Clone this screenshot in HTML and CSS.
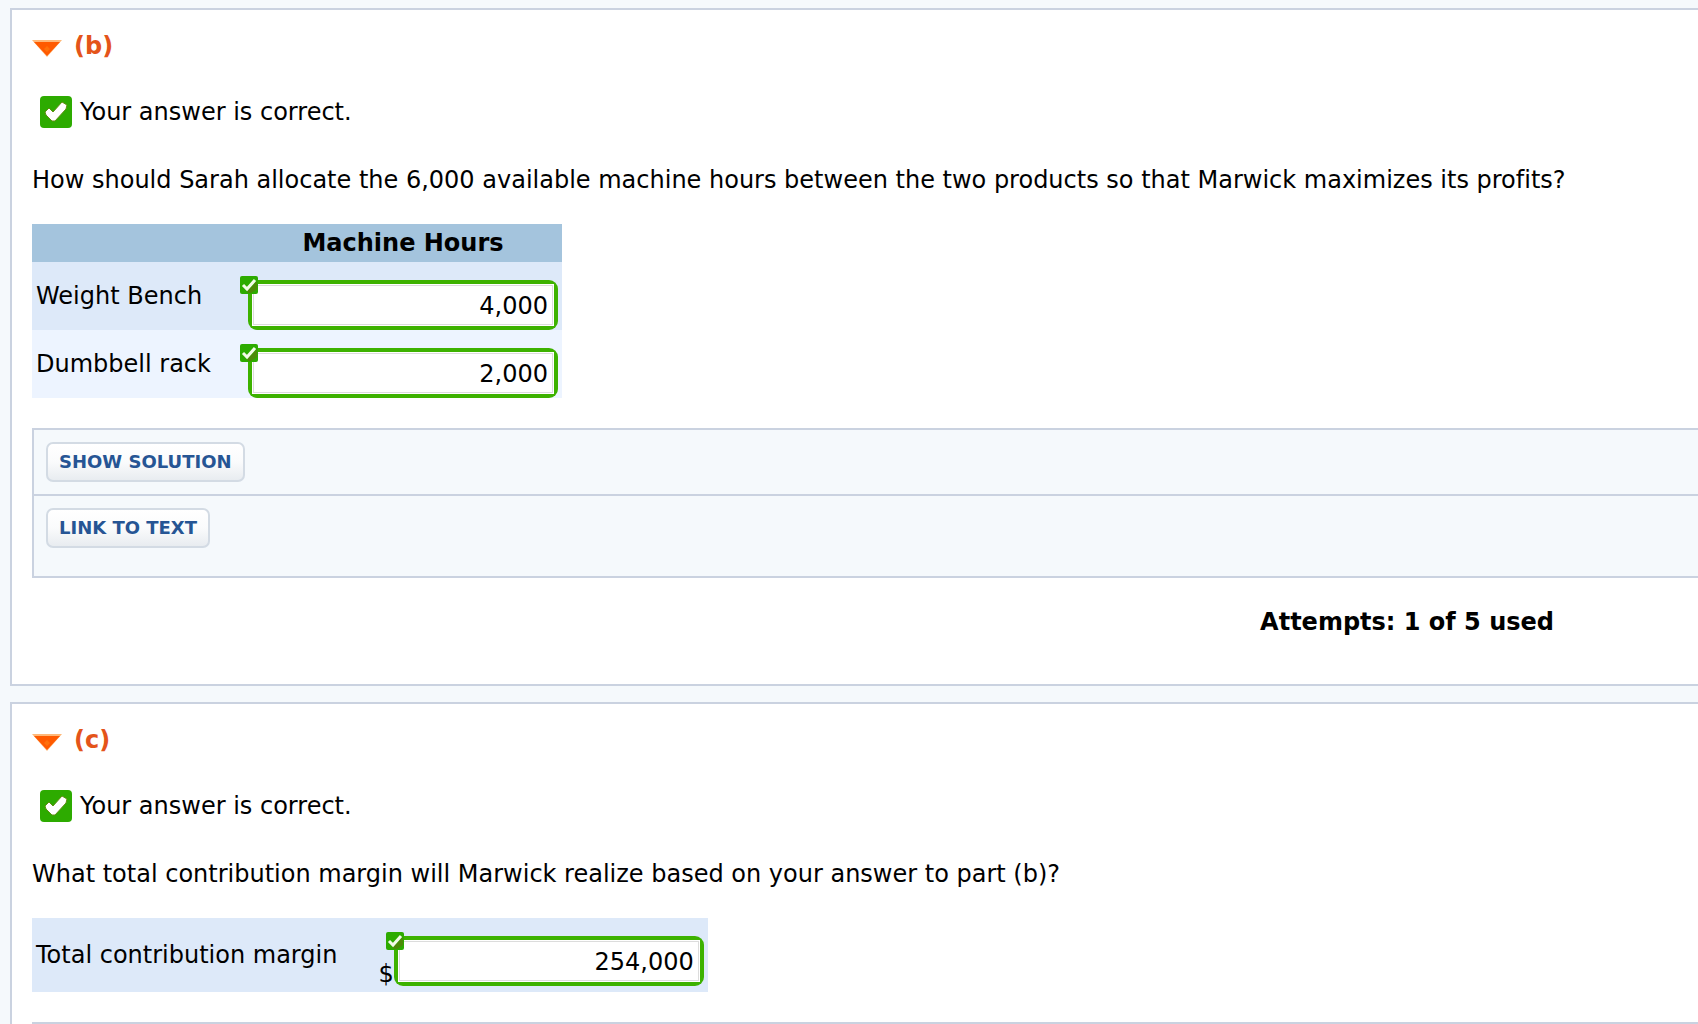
FILE: index.html
```html
<!DOCTYPE html>
<html lang="en">
<head>
    <meta charset="UTF-8">
    <meta name="viewport" content="width=device-width, initial-scale=1.0">
    <title>Marwick Assignment</title>
    <link rel="stylesheet" href="styles.css">
</head>
<body>
    <svg class="defs" aria-hidden="true">
        <symbol id="arrow" viewBox="0 0 30 17">
            <path d="M0 0H30L15 17Z" fill="#ffb878"/>
            <path d="M2 2H28L15 16Z" fill="#ff5a00"/>
            <path d="M9 6L12 9L15 6L18 9L21 6L15 12Z" fill="#ff700a"/>
        </symbol>
        <symbol id="check" viewBox="0 0 32 32">
            <rect width="32" height="32" rx="4" fill="#2dab00"/>
            <path d="M5 16L9 12L13 16L22 6L27 9L26 13L15 25H12L6 19Z" fill="#fff" stroke="#5f8f12" stroke-width="1"/>
        </symbol>
        <symbol id="badge" viewBox="0 0 18 18">
            <rect width="18" height="18" rx="2" fill="#2dab00"/>
            <path d="M3 10L7 15L17 5V13L11 17H8Z" fill="#4d8a08"/>
            <path d="M3 9L7 13L15 4" fill="none" stroke="#f4fbe8" stroke-width="3"/>
        </symbol>
    </svg>

    <section class="part">
        <h2><svg class="arrow"><use href="#arrow"/></svg>(b)</h2>
        <p class="result"><svg class="check"><use href="#check"/></svg>Your answer is correct.</p>
        <p class="question">How should Sarah allocate the 6,000 available machine hours between the two products so that Marwick maximizes its profits?</p>
        <table class="hours">
            <thead>
                <tr><th class="label-col"></th><th>Machine Hours</th></tr>
            </thead>
            <tbody>
                <tr>
                    <td><label for="bench">Weight Bench</label></td>
                    <td><div class="answer"><svg class="badge"><use href="#badge"/></svg><div class="field"><input type="text" id="bench" value="4,000"></div></div></td>
                </tr>
                <tr class="alt">
                    <td><label for="rack">Dumbbell rack</label></td>
                    <td><div class="answer"><svg class="badge"><use href="#badge"/></svg><div class="field"><input type="text" id="rack" value="2,000"></div></div></td>
                </tr>
            </tbody>
        </table>
        <div class="tools">
            <div class="tool-row"><button type="button">SHOW SOLUTION</button></div>
            <div class="tool-row last"><button type="button">LINK TO TEXT</button></div>
        </div>
        <p class="attempts">Attempts: 1 of 5 used</p>
    </section>

    <section class="part open">
        <h2><svg class="arrow"><use href="#arrow"/></svg>(c)</h2>
        <p class="result"><svg class="check"><use href="#check"/></svg>Your answer is correct.</p>
        <p class="question">What total contribution margin will Marwick realize based on your answer to part (b)?</p>
        <table class="margin">
            <tbody>
                <tr>
                    <td><label for="total">Total contribution margin</label></td>
                    <td class="money"><div class="money-line"><span class="dollar">$</span><div class="answer"><svg class="badge"><use href="#badge"/></svg><div class="field"><input type="text" id="total" value="254,000"></div></div></div></td>
                </tr>
            </tbody>
        </table>
        <div class="tools-edge"></div>
    </section>
</body>
</html>
```
FILE: styles.css
```css
body {
    margin: 0;
    padding: 8px 0 0 10px;
    font-family: Verdana, "DejaVu Sans", sans-serif;
    font-size: 24px;
    font-variant-ligatures: none;
    line-height: 30px;
    color: #000;
    background-color: #f5f9fc;
}
.defs {
    display: none;
}
.part {
    background-color: #fff;
    border: 2px solid #cad2e0;
    border-right: none;
    padding: 21px 0 47px 20px;
    margin-bottom: 16px;
}
.part.open {
    border-bottom: none;
    padding-bottom: 0;
    margin-bottom: 0;
}
h2 {
    display: flex;
    align-items: center;
    gap: 12px;
    margin: 0 0 35px;
    font-size: 24px;
    color: #e4541a;
}
.arrow {
    width: 30px;
    height: 17px;
    margin-top: 4px;
}
.result {
    display: flex;
    align-items: center;
    gap: 8px;
    margin: 0 0 37px 8px;
}
.check {
    width: 32px;
    height: 32px;
}
.question {
    margin: 0 0 29px;
}
table {
    border-collapse: collapse;
    background-color: #dde9f9;
}
th {
    height: 38px;
    padding: 0 4px;
    background-color: #a4c4dd;
}
td {
    padding: 0 4px;
}
.alt {
    background-color: #edf4ff;
}
.hours {
    margin-bottom: 30px;
}
.label-col {
    width: 204px;
}
.answer {
    position: relative;
    padding-top: 18px;
}
.badge {
    position: absolute;
    top: 14px;
    left: -8px;
    width: 18px;
    height: 18px;
}
.field {
    padding: 5px;
    border-radius: 9px;
    background-color: #3db200;
}
input {
    display: block;
    box-sizing: border-box;
    width: 300px;
    height: 40px;
    padding: 1px 4px 0;
    border: 1px solid #dcdcdc;
    background-color: #fff;
    box-shadow: 0 0 0 1px #fff;
    font: inherit;
    text-align: right;
}
.tools {
    border: 2px solid #cad2e0;
    border-right: none;
    background-color: #f5f9fc;
}
.tool-row {
    padding: 12px;
}
.tool-row.last {
    border-top: 2px solid #cad2e0;
    padding-bottom: 28px;
}
button {
    display: block;
    height: 40px;
    padding: 0 11px 2px;
    border: 2px solid #d3dbe4;
    border-radius: 7px;
    background: linear-gradient(#fff, #fafbfc 50%, #e8ecf0);
    font-family: inherit;
    font-size: 18px;
    font-weight: bold;
    color: #265594;
    cursor: pointer;
}
.attempts {
    margin: 29px 144px 0 0;
    font-weight: bold;
    text-align: right;
}
.margin {
    margin-bottom: 30px;
}
.margin label {
    padding-right: 33px;
}
.money {
    padding-bottom: 6px;
}
.money-line {
    display: flex;
    align-items: flex-end;
}
.dollar {
    line-height: 24px;
}
.tools-edge {
    border-top: 2px solid #cad2e0;
}
```
